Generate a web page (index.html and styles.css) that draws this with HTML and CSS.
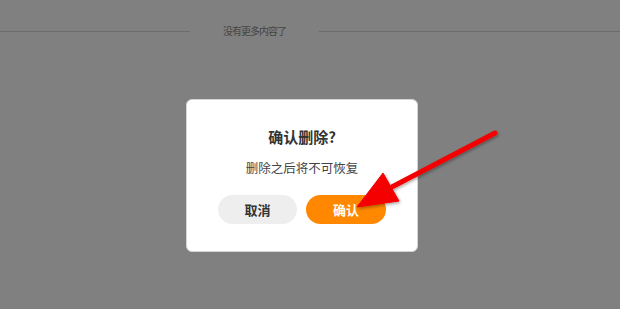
FILE: index.html
```html
<!DOCTYPE html>
<html lang="zh-CN">
  <head>
    <meta charset="UTF-8" />
    <meta name="viewport" content="width=device-width, initial-scale=1.0" />
    <title>确认删除</title>
    <link rel="stylesheet" href="styles.css">
  </head>
  <body>
    <div class="page">
      <div class="divider">
        <span class="divider-line first"></span>
        <span class="divider-text">没有更多内容了</span>
        <span class="divider-line"></span>
      </div>

      <div class="modal">
        <div class="modal-title">确认删除?</div>
        <div class="modal-desc">删除之后将不可恢复</div>
        <div class="modal-actions">
          <button class="btn btn-cancel">取消</button>
          <button class="btn btn-confirm">确认</button>
        </div>
      </div>

      <!-- 标注箭头 -->
      <svg class="arrow" width="620" height="309" viewBox="0 0 620 309">
        <defs>
          <filter id="shadow" x="-20%" y="-20%" width="140%" height="140%">
            <feDropShadow dx="1" dy="1.5" stdDeviation="1.5" flood-color="#000" flood-opacity="0.35" />
          </filter>
        </defs>
        <g filter="url(#shadow)" fill="#f40000" stroke="#f40000">
          <line x1="495" y1="133" x2="388" y2="189" stroke-width="5" stroke-linecap="round" />
          <polygon points="357,207 383,173 399,201" stroke-width="1" stroke-linejoin="round" />
        </g>
      </svg>
    </div>
  </body>
</html>
```

FILE: styles.css
```css
body {
  margin: 0;
  background: #808080;
  font-family: "Noto Sans CJK SC", "Noto Sans", sans-serif;
}

.page {
  position: relative;
  width: 620px;
  height: 309px;
  overflow: hidden;
}

.divider {
  display: flex;
  align-items: center;
  padding-top: 24px;
  height: 14px;
}

.divider-line {
  flex: 1;
  height: 1px;
  background: #6c6c6c;
}

.divider-line.first {
  flex: none;
  width: 190px;
}

.divider-text {
  padding: 0 33px;
  font-size: 10px;
  letter-spacing: -1px;
  line-height: 14px;
  color: #444;
}

.modal {
  box-sizing: border-box;
  width: 232px;
  height: 153px;
  margin: 61px 0 0 186px;
  padding-top: 27px;
  background: #fff;
  border: 1px solid #d4d4d4;
  border-radius: 6px;
  text-align: center;
}

.modal-title {
  font-size: 15px;
  font-weight: bold;
  line-height: 20px;
  color: #333;
}

.modal-desc {
  margin-top: 12px;
  font-size: 12.5px;
  line-height: 18px;
  color: #444;
}

.modal-actions {
  display: flex;
  justify-content: center;
  gap: 9px;
  margin-top: 18px;
}

.btn {
  width: 79px;
  height: 29px;
  border: none;
  border-radius: 15px;
  font-family: inherit;
  font-size: 13px;
  font-weight: bold;
  cursor: pointer;
}

.btn-cancel {
  background: #eeeeee;
  color: #333;
}

.btn-confirm {
  width: 80px;
  background: #ff8800;
  color: #fff;
}

.arrow {
  position: absolute;
  top: 0;
  left: 0;
  pointer-events: none;
}
```
